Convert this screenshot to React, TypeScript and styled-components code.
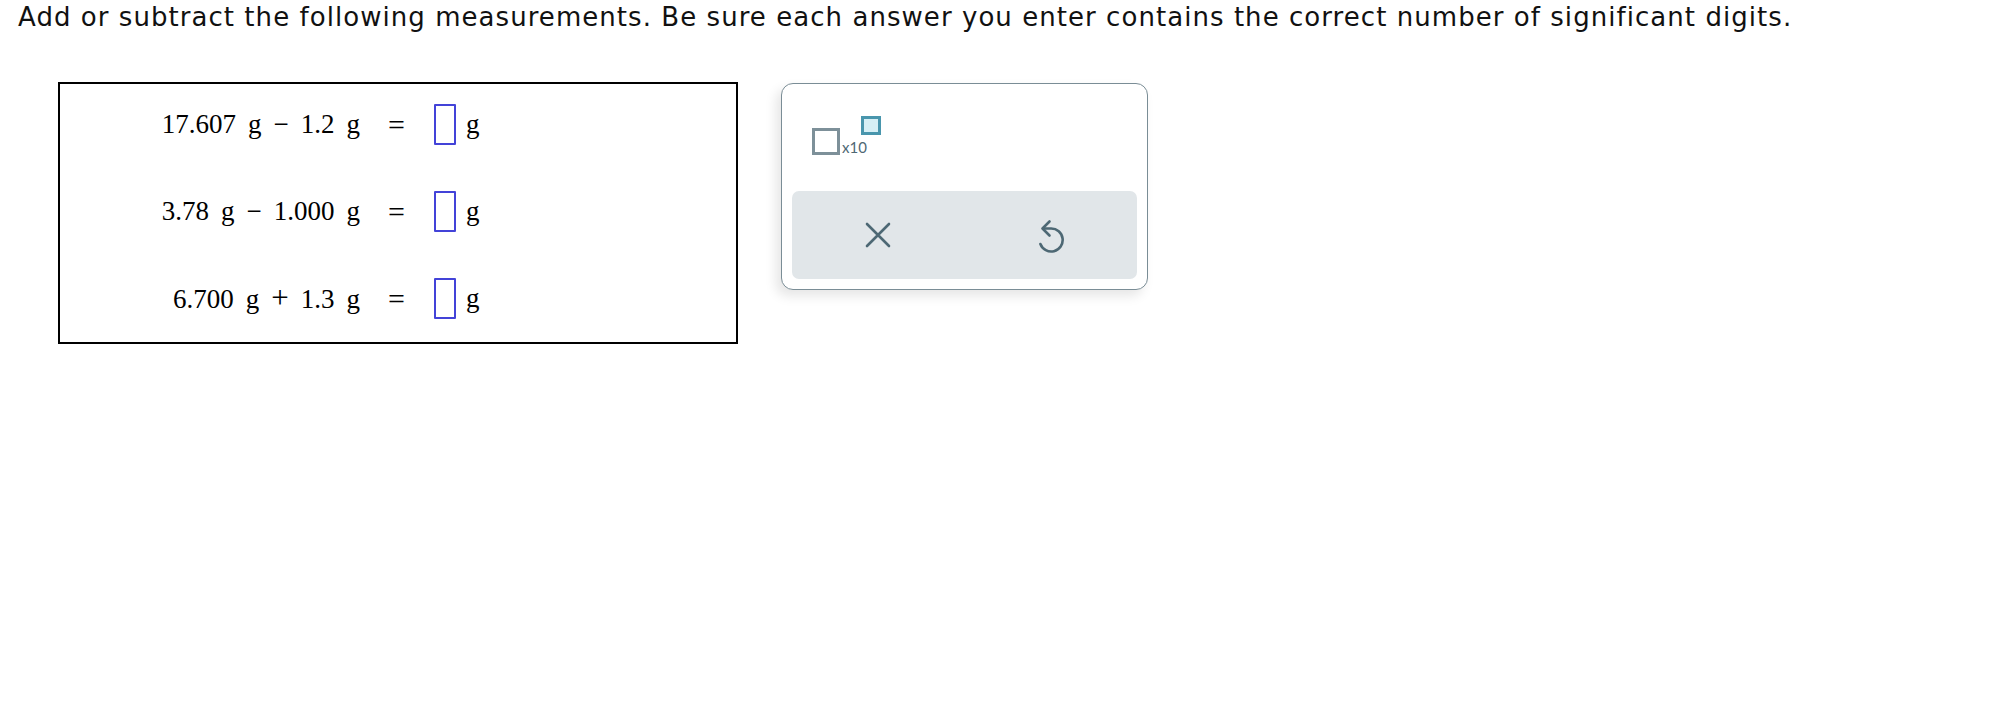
import styled, { createGlobalStyle } from 'styled-components'

const GlobalStyle = createGlobalStyle`
  html, body {
    margin: 0;
    padding: 0;
    background: #ffffff;
  }
`

const Page = styled.div`
  padding: 2px 0 0 18px;
  width: 2010px;
  height: 712px;
  box-sizing: border-box;
`

const Prompt = styled.p`
  margin: 0;
  font-family: 'DejaVu Sans', Verdana, sans-serif;
  font-size: 26px;
  line-height: 30px;
  letter-spacing: 1.05px;
  color: #111111;
  white-space: nowrap;
`

const Content = styled.div`
  display: flex;
  align-items: flex-start;
  margin: 50px 0 0 40px;
  gap: 43px;
`

const ProblemBox = styled.div`
  width: 680px;
  box-sizing: border-box;
  border: 2px solid #000000;
  padding: 10px 0 14px;
  display: flex;
  flex-direction: column;
  gap: 27px;
`

const Row = styled.div`
  height: 60px;
  display: flex;
  align-items: center;
  font-family: 'Liberation Serif', 'Times New Roman', serif;
  font-size: 27px;
  line-height: 27px;
  color: #000000;
`

const Expr = styled.div`
  width: 300px;
  display: flex;
  justify-content: flex-end;
  align-items: baseline;
  gap: 12px;
`

const Term = styled.span<{ $op?: boolean }>`
  font-size: ${({ $op }) => ($op ? '31px' : 'inherit')};
  line-height: 27px;
`

const Equals = styled.span`
  margin-left: 28px;
  font-size: 30px;
`

const AnswerSlot = styled.span`
  margin-left: 29px;
  width: 22px;
  height: 41px;
  box-sizing: border-box;
  border: 2px solid #4343d8;
  border-radius: 1px;
  background: #ffffff;
`

const Unit = styled.span`
  margin-left: 10px;
`

const Panel = styled.div`
  margin-top: 1px;
  width: 367px;
  box-sizing: border-box;
  border: 1.5px solid #7a8d96;
  border-radius: 12px;
  background: #ffffff;
  padding: 0 10px 10px;
  box-shadow: -5px 6px 12px rgba(0, 0, 0, 0.1);
`

const TopArea = styled.div`
  height: 107px;
  box-sizing: border-box;
  padding: 32px 0 0 20px;
`

const SciWidget = styled.div`
  display: inline-flex;
  align-items: flex-end;
  height: 39px;
`

const BaseSlot = styled.span`
  width: 28px;
  height: 27px;
  box-sizing: border-box;
  border: 3px solid #7d9099;
  background: #ffffff;
`

const Times10 = styled.span`
  margin: 0 0 1px 2px;
  font-family: Lato, 'Open Sans', sans-serif;
  font-size: 15px;
  line-height: 14px;
  color: #4f6874;
`

const ExpSlot = styled.span`
  align-self: flex-start;
  margin-left: -6px;
  width: 20px;
  height: 19px;
  box-sizing: border-box;
  border: 3px solid #4996ad;
  background: #d6eff5;
`

const ActionBar = styled.div`
  height: 88px;
  border-radius: 7px;
  background: #e1e6e9;
  display: grid;
  grid-template-columns: 1fr 1fr;
`

const ActionButton = styled.button`
  border: none;
  background: transparent;
  padding: 0;
  display: flex;
  align-items: center;
  justify-content: center;
  cursor: pointer;
  color: #4d6874;
`

type Problem = {
  terms: string[]
}

const problems: Problem[] = [
  { terms: ['17.607', 'g', '\u2212', '1.2', 'g'] },
  { terms: ['3.78', 'g', '\u2212', '1.000', 'g'] },
  { terms: ['6.700', 'g', '+', '1.3', 'g'] },
]

function ClearIcon() {
  return (
    <svg width="26" height="26" viewBox="0 0 26 26" fill="none">
      <path d="M2 2 L24 24 M24 2 L2 24" stroke="currentColor" strokeWidth="2.6" strokeLinecap="round" />
    </svg>
  )
}

function UndoIcon() {
  return (
    <svg width="28" height="36" viewBox="0 0 28 36" fill="none">
      <path
        d="M6 11.5 H14 A11.5 11.5 0 1 1 3.4 27"
        stroke="currentColor"
        strokeWidth="2.6"
        strokeLinecap="round"
        strokeLinejoin="round"
      />
      <path
        d="M12.5 4.5 L5.5 11.5 L12.5 18.5"
        stroke="currentColor"
        strokeWidth="2.6"
        strokeLinecap="round"
        strokeLinejoin="round"
      />
    </svg>
  )
}

export default function App() {
  return (
    <>
      <GlobalStyle />
      <Page>
        <Prompt>
          Add or subtract the following measurements. Be sure each answer you enter contains the correct number of significant digits.
        </Prompt>
        <Content>
          <ProblemBox>
            {problems.map((p, i) => (
              <Row key={i}>
                <Expr>
                  {p.terms.map((t, j) => (
                    <Term key={j} $op={t === '+'}>
                      {t}
                    </Term>
                  ))}
                </Expr>
                <Equals>=</Equals>
                <AnswerSlot />
                <Unit>g</Unit>
              </Row>
            ))}
          </ProblemBox>
          <Panel>
            <TopArea>
              <SciWidget>
                <BaseSlot />
                <Times10>x10</Times10>
                <ExpSlot />
              </SciWidget>
            </TopArea>
            <ActionBar>
              <ActionButton aria-label="Clear">
                <ClearIcon />
              </ActionButton>
              <ActionButton aria-label="Undo">
                <UndoIcon />
              </ActionButton>
            </ActionBar>
          </Panel>
        </Content>
      </Page>
    </>
  )
}
